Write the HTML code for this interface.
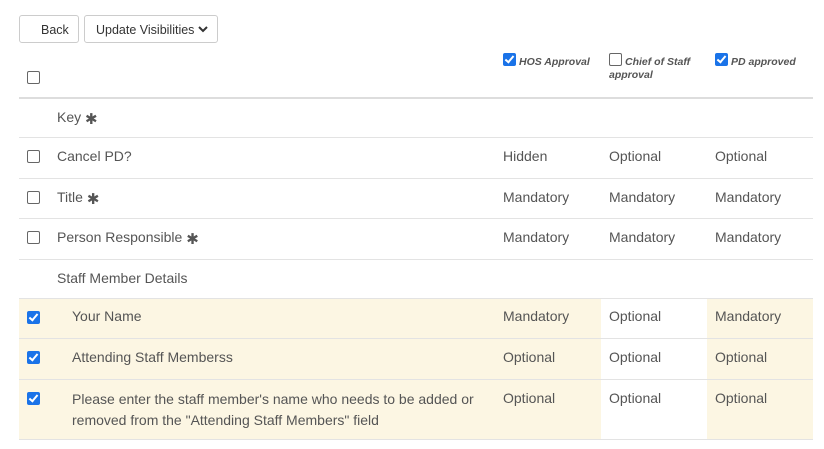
<!DOCTYPE html>
<html><head><style>
body{margin:0;width:824px;height:449px;background:#fff;font-family:"Liberation Sans",sans-serif;color:#555;font-size:14px;position:relative;overflow:hidden}
.a{position:absolute;white-space:nowrap}
.btn{position:absolute;top:15px;height:28px;border:1px solid #ccc;border-radius:3px;background:#fff;font-size:12.5px;color:#333;line-height:28px;box-sizing:border-box}
.cb{position:absolute;width:11px;height:11px;border:1px solid #666;border-radius:2px;background:#fff}
.cc{position:absolute;width:13px;height:13px;border-radius:2px;background:#1a73e8}
.cc:after{content:"";position:absolute;left:4px;top:1px;width:3px;height:7px;border:solid #fff;border-width:0 2px 2px 0;transform:rotate(40deg)}
.ln{position:absolute;left:19px;width:794px;height:1px;background:#e3e3e3}
.row{position:absolute;left:19px;width:794px;background:#fcf6e3}
.wh{position:absolute;left:601px;width:106px;background:#fff}
.h{font-size:10.5px;font-style:italic;font-weight:bold;color:#555}
.ast{font-size:15px;color:#555;vertical-align:-2px}
</style></head><body>
<div class="btn" style="left:19px;width:60px;padding-left:21px">Back</div>
<div class="btn" style="left:84px;width:134px;padding-left:11px">Update Visibilities <svg width="10" height="7" viewBox="0 0 10 7" style="vertical-align:1px"><path d="M1 1l4 4 4-4" fill="none" stroke="#333" stroke-width="2"/></svg></div>
<div class="cb" style="left:27px;top:71px"></div>
<div class="cc" style="left:503px;top:53px"></div><div class="a h" style="left:519px;top:56px">HOS Approval</div>
<div class="cb" style="left:609px;top:53px"></div><div class="a h" style="left:625px;top:56px;line-height:13px">Chief of Staff<br><span style="margin-left:-16px">approval</span></div>
<div class="cc" style="left:715px;top:53px"></div><div class="a h" style="left:731px;top:56px">PD approved</div>
<div class="ln" style="top:97px;height:2px;background:#ddd"></div>
<div class="row" style="top:298px;height:141px"></div>
<div class="wh" style="top:298px;height:141px"></div>
<div class="a" style="left:57px;top:109px">Key <span class="ast">✱</span></div>
<div class="ln" style="top:137px"></div>
<div class="cb" style="left:27px;top:150px"></div><div class="a" style="left:57px;top:148px">Cancel PD?</div>
<div class="a" style="left:503px;top:148px">Hidden</div><div class="a" style="left:609px;top:148px">Optional</div><div class="a" style="left:715px;top:148px">Optional</div>
<div class="ln" style="top:178px"></div>
<div class="cb" style="left:27px;top:191px"></div><div class="a" style="left:57px;top:189px">Title <span class="ast">✱</span></div>
<div class="a" style="left:503px;top:189px">Mandatory</div><div class="a" style="left:609px;top:189px">Mandatory</div><div class="a" style="left:715px;top:189px">Mandatory</div>
<div class="ln" style="top:218px"></div>
<div class="cb" style="left:27px;top:231px"></div><div class="a" style="left:57px;top:229px">Person Responsible <span class="ast">✱</span></div>
<div class="a" style="left:503px;top:229px">Mandatory</div><div class="a" style="left:609px;top:229px">Mandatory</div><div class="a" style="left:715px;top:229px">Mandatory</div>
<div class="ln" style="top:259px"></div>
<div class="a" style="left:57px;top:270px">Staff Member Details</div>
<div class="ln" style="top:298px"></div>
<div class="cc" style="left:27px;top:311px"></div><div class="a" style="left:72px;top:308px">Your Name</div>
<div class="a" style="left:503px;top:308px">Mandatory</div><div class="a" style="left:609px;top:308px">Optional</div><div class="a" style="left:715px;top:308px">Mandatory</div>
<div class="ln" style="top:338px"></div>
<div class="cc" style="left:27px;top:351px"></div><div class="a" style="left:72px;top:349px">Attending Staff Memberss</div>
<div class="a" style="left:503px;top:349px">Optional</div><div class="a" style="left:609px;top:349px">Optional</div><div class="a" style="left:715px;top:349px">Optional</div>
<div class="ln" style="top:379px"></div>
<div class="cc" style="left:27px;top:392px"></div><div class="a" style="left:72px;top:389px;line-height:21px">Please enter the staff member's name who needs to be added or<br>removed from the "Attending Staff Members" field</div>
<div class="a" style="left:503px;top:390px">Optional</div><div class="a" style="left:609px;top:390px">Optional</div><div class="a" style="left:715px;top:390px">Optional</div>
<div class="ln" style="top:439px"></div>
</body></html>
